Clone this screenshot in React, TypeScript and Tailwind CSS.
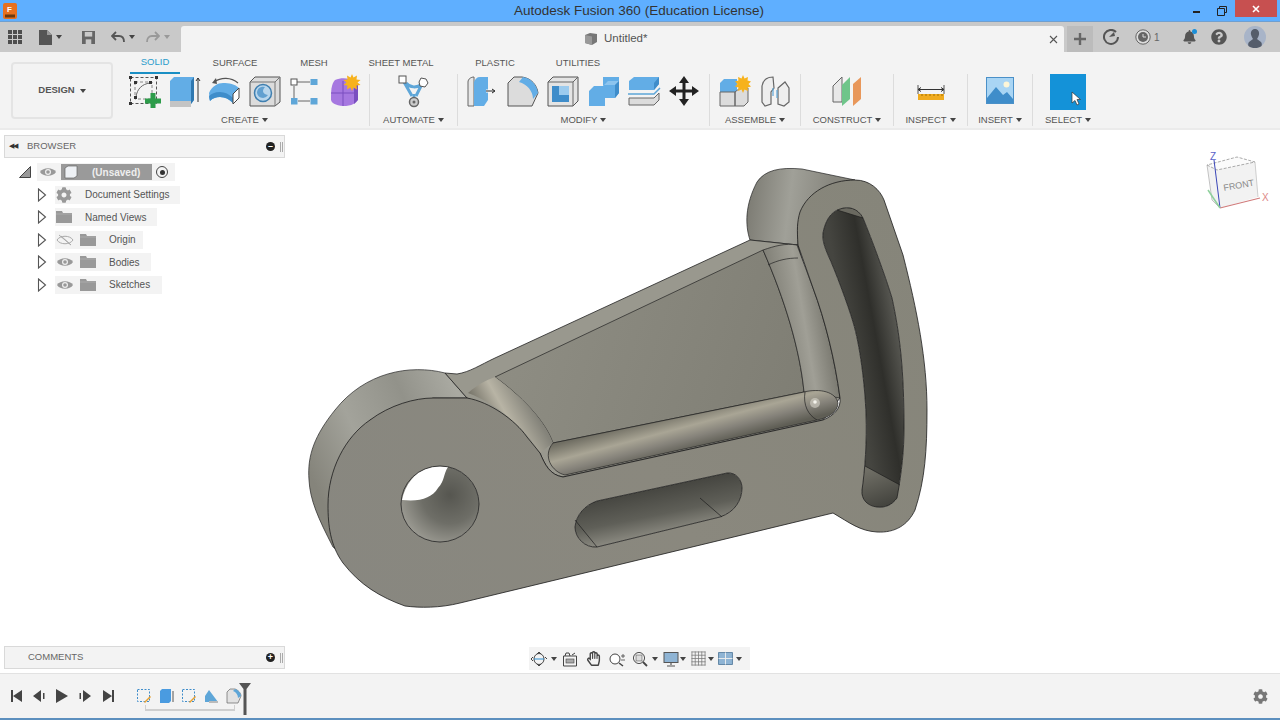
import React from 'react';
import { FaBell, FaCog, FaQuestionCircle, FaRegHandPaper } from 'react-icons/fa';

const font = { fontFamily: '"Liberation Sans", Arial, sans-serif' };

const Caret = ({ className = '' }: { className?: string }) => (
  <span className={`inline-block w-0 h-0 border-x-[3px] border-t-[4px] border-x-transparent border-t-[#444] ${className}`} />
);

// ribbon icons, all on a 34x34 box
const Ico = ({ children }: { children: React.ReactNode }) => (
  <svg viewBox="0 0 34 34" className="w-[34px] h-[34px] shrink-0">{children}</svg>
);

const SketchIcon = () => (
  <Ico>
    <rect x="3.5" y="3.5" width="26" height="26" fill="none" stroke="#555" strokeWidth="1" strokeDasharray="3 2" />
    <rect x="8" y="8" width="17" height="17" fill="none" stroke="#888" strokeWidth="1" strokeDasharray="3 2" />
    <path d="M9 23 C10 15 15 10 23 9" fill="none" stroke="#666" strokeWidth="1" />
    <path d="M2 2h3v3H2zM28 2h3v3h-3zM2 28h3v3H2zM7 7h3v3H7zM7 22h3v3H7zM22 7h3v3h-3z" fill="#333" />
    <path d="M23.500 19h5v5.500H34v5h-5.500V34h-5v-4.500H18v-5h5.500z" fill="#2d9c4a" />
  </Ico>
);
const ExtrudeIcon = () => (
  <Ico>
    <path d="M3 7l4-4h20v23l-3 4H3z" fill="#62ade6" />
    <path d="M24 7l3-4v23l-3 4z" fill="#2f78b0" />
    <path d="M3 27h21v6H3z" fill="#c4c4c4" />
    <path d="M31 28V4m-2 3l2-3 2 3" stroke="#333" fill="none" strokeWidth="1" />
  </Ico>
);
const RevolveIcon = () => (
  <Ico>
    <path d="M2 19 C5 12 11 9 16 9 C22 9 28 10 32 14 L26 20 V29 C22 25 18 23 13 23 C9 23 6 24 3 27z" fill="#62ade6" />
    <path d="M2 19 C2 22 2 25 3 27 C6 24 9 23 13 23 C18 23 22 25 26 29 V24 C22 20 18 18 13 18 C8 18 4 20 2 22z" fill="#3f8dca" />
    <path d="M26 20 L32 14 V24 L26 30z" fill="#fff" stroke="#444" strokeWidth="1" />
    <path d="M7 8 C14 3 24 3 31 9" fill="none" stroke="#555" strokeWidth="1.200" />
    <path d="M9 4 L5 9 L10 10z" fill="#555" />
  </Ico>
);
const HoleIcon = () => (
  <Ico>
    <path d="M2 8l5-5h25v25l-5 4H2z" fill="#dcdcdc" stroke="#555" strokeWidth="1" />
    <path d="M27 8l5-5M27 8H2M27 8v24" fill="none" stroke="#777" strokeWidth="1" />
    <circle cx="15" cy="19" r="8.5" fill="#b9d6ec" stroke="#3f7fb0" strokeWidth="1.5" />
    <path d="M9 19 a6 6 0 0 1 8-6 c-3 3-3 7 3 8 a6 6 0 0 1-11-2z" fill="#62a0d0" />
  </Ico>
);
const PatternIcon = () => (
  <Ico>
    <path d="M9 8h13M6 12v12M10 27h12" stroke="#666" strokeWidth="1" />
    <rect x="3" y="5" width="6" height="6" fill="#fff" stroke="#555" strokeWidth="1" />
    <rect x="22.5" y="5" width="7" height="6" fill="#5ea6d8" />
    <rect x="3" y="24" width="6.5" height="6.5" fill="#5ea6d8" />
    <rect x="22.5" y="24" width="7" height="6.5" fill="#5ea6d8" />
  </Ico>
);
const FormIcon = () => (
  <Ico>
    <path d="M7 6 C14 3 22 4 27 8 L30 24 C30 28 26 31 18 32 C10 32 4 30 3 26 C3 18 3 10 7 6z" fill="#a678e0" />
    <path d="M26 12l4-3v17l-4 4z" fill="#7a4fc0" />
    <path d="M3 19h24M15 7v25" stroke="#7a4fc0" strokeWidth="1" />
    <path d="M24 0l1.5 3.5L29 1.5l-.5 4L32.5 6l-3 2.5 3 2.5-4 .5.5 4-3.500-2-1.500 3.500-1.500-3.500-3.500 2 .5-4-4-.5 3-2.500-3-2.500 4-.5-.5-4 3.500 2z" fill="#f7b21c" />
  </Ico>
);
const AutomateIcon = () => (
  <Ico>
    <path d="M7 8 L15 22 M25 10 L19 22 M9 9 C13 14 20 14 25 10" fill="none" stroke="#5ea6d8" strokeWidth="3" />
    <path d="M17 20v8" stroke="#5ea6d8" strokeWidth="3" />
    <rect x="2" y="2" width="7" height="7" fill="#fff" stroke="#555" strokeWidth="1" />
    <path d="M24 4l5 1 2 4-3 4-5-1-1-4z" fill="#fff" stroke="#555" strokeWidth="1" />
    <circle cx="17" cy="28" r="4.500" fill="#ccc" stroke="#666" strokeWidth="1.500" />
    <circle cx="17" cy="28" r="1.500" fill="#666" />
  </Ico>
);
const PressPullIcon = () => (
  <Ico>
    <path d="M2 8 C2 5 5 3 8 3 V32 H2z" fill="#e6e6e6" stroke="#666" strokeWidth="1" />
    <path d="M8 8 C9 5 11 3 14 3 H22 V26 L18 32 H8z" fill="#62ade6" />
    <path d="M20 17h8" stroke="#fff" strokeWidth="3" />
    <path d="M20 17h8m-2-2l3 2-3 2" stroke="#222" fill="none" strokeWidth="1" />
  </Ico>
);
const FilletIcon = () => (
  <Ico>
    <path d="M2 9 L8 3 H16 C25 4 31 11 32 19 L26 32 H2z" fill="#dcdcdc" stroke="#555" strokeWidth="1" />
    <path d="M17 3 C25 4 31 11 32 19 L27 25 C27 17 21 10 13 8z" fill="#62ade6" />
  </Ico>
);
const ShellIcon = () => (
  <Ico>
    <path d="M2 8l5-5h25v24l-5 5H2z" fill="#e4e4e4" stroke="#555" strokeWidth="1" />
    <path d="M2 8h25v24M27 8l5-5" fill="none" stroke="#666" strokeWidth="1" />
    <rect x="6" y="12" width="17" height="16" fill="#9ccbee" />
    <path d="M6 12h7v9h10v7H6z" fill="#3f8dca" />
  </Ico>
);
const CombineIcon = () => (
  <Ico>
    <path d="M2 17l5-5h9V3l5 0h11v16l-4 5h-10v8H2z" fill="#62ade6" />
    <path d="M16 12l5-5h11l-4 4H16z" fill="#8cc4ee" />
    <path d="M28 11l4-4v12l-4 5z" fill="#3f8dca" />
  </Ico>
);
const SplitIcon = () => (
  <Ico>
    <path d="M2 7l5-4h25v7l-5 6H2z" fill="#62ade6" />
    <path d="M27 9l5-6v7l-5 6z" fill="#3f8dca" />
    <path d="M1 20h26l6-6" fill="none" stroke="#5ea6d8" strokeWidth="1.500" />
    <path d="M2 24h25l5-5v7l-5 5H2z" fill="#dcdcdc" stroke="#666" strokeWidth="1" />
  </Ico>
);
const MoveIcon = () => (
  <Ico>
    <path d="M17 2l5 7h-3.500v6.500H25V12l7 5-7 5v-3.500h-6.500V25H22l-5 7-5-7h3.500v-6.500H9V22l-7-5 7-5v3.500h6.500V9H12z" fill="#222" />
  </Ico>
);
const NewComponentIcon = () => (
  <Ico>
    <path d="M2 9l4-4h13v13H2z" fill="#62ade6" />
    <path d="M2 18h15v14H2zM17 18l5-4h8v14l-4 4h-9z" fill="#dcdcdc" stroke="#666" strokeWidth="1" />
    <path d="M25 1l1.500 3.500L30 3l-.5 3.500 3.500 1-2.500 2.500 2.500 2.500-3.500 1 .5 3.500-3.500-1.500L25 19l-1.500-3.500-3.500 1.500.5-3.500-3.500-1 2.500-2.500L17 7.500l3.500-1L20 3l3.500 1.500z" fill="#f7b21c" />
  </Ico>
);
const JointIcon = () => (
  <Ico>
    <path d="M4 12 C5 6 9 3 15 3 L16 14 L13 18 L13 30 L7 32 L4 28z" fill="#eee" stroke="#666" strokeWidth="1.200" />
    <path d="M20 14 L27 8 L31 14 V28 L26 32 L20 30z" fill="#eee" stroke="#666" strokeWidth="1.200" />
    <path d="M15 14v8M19 16v8" stroke="#5ea6d8" strokeWidth="1.200" />
  </Ico>
);
const ConstructIcon = () => (
  <Ico>
    <path d="M3 12 L12 3 V28 H3z" fill="#e8e8e8" stroke="#666" strokeWidth="1" />
    <path d="M12 11 L20 3 V25 L12 32z" fill="#6fc58a" />
    <path d="M23 10 L31 3 V25 L23 32z" fill="#e8975a" />
  </Ico>
);
const InspectIcon = () => (
  <Ico>
    <path d="M4 11v9M30 11v9" stroke="#555" strokeWidth="1" />
    <path d="M4 15.500h26m-23-2l-3 2 3 2m20-4l3 2-3 2" stroke="#333" fill="none" strokeWidth="1" />
    <rect x="4" y="20" width="26" height="6" fill="#f0ab1e" />
    <path d="M8 20v2M12 20v2M16 20v2M20 20v2M24 20v2M28 20v2" stroke="#a06f00" strokeWidth="1" />
  </Ico>
);
const InsertIcon = () => (
  <Ico>
    <rect x="3.500" y="3.500" width="27" height="26" fill="#a9d5f4" stroke="#4a90c8" />
    <circle cx="23.500" cy="10.500" r="3" fill="#fdf6d8" />
    <path d="M4 24 L13 13 L20 21 L24 18 L30 25 V29 H4z" fill="#3f8dca" />
  </Ico>
);

const Group = ({ w, label, last, children }: { w: string; label: string; last?: boolean; children: React.ReactNode }) => (
  <div className={`${w} h-[52px] flex flex-col items-center ${last ? '' : 'border-r border-[#dcdcdc]'}`}>
    <div className="h-[36px] flex items-start justify-center gap-[6.400px]">{children}</div>
    <div className="mt-[3px] pt-[1px] flex items-center gap-[3px] text-[9.500px] leading-[12px] text-[#555]">
      {label}
      <Caret />
    </div>
  </div>
);

const Eye = ({ off }: { off?: boolean }) => (
  <svg viewBox="0 0 18 12" className="w-[18px] h-[12px] shrink-0">
    <path d="M1 6 C4 1 14 1 17 6 C14 11 4 11 1 6z" fill={off ? 'none' : '#999'} stroke={off ? '#aaa' : 'none'} />
    {off ? <path d="M3 1l12 10M5 2l10 9" stroke="#aaa" /> : <circle cx="9" cy="6" r="3" fill="#eee" />}
    {!off && <circle cx="9" cy="6" r="1.800" fill="#999" />}
  </svg>
);
const Folder = () => (
  <svg viewBox="0 0 16 12" className="w-[16px] h-[12px] shrink-0">
    <path d="M0 0h6l1 2h9v10H0z" fill="#999" />
    <path d="M0 3h16" stroke="#bbb" strokeWidth=".6" />
  </svg>
);
const Chevron = () => (
  <svg viewBox="0 0 10 14" className="w-[10px] h-[14px] shrink-0">
    <path d="M1.500 1 L8.500 7 L1.500 13z" fill="#fff" stroke="#555" strokeWidth="1.100" />
  </svg>
);

const TreeRow = ({ w, label, eye, off, gear }: { w: string; label: string; eye?: boolean; off?: boolean; gear?: boolean }) => (
  <div className="h-[22.500px] flex items-center pl-[37px]">
    <Chevron />
    <div className={`ml-[8px] ${w} h-[18px] bg-[#f3f3f3] flex items-center pl-[1px] text-[10px] text-[#555]`}>
      {eye && <span className="mr-[6px] flex"><Eye off={off} /></span>}
      {gear ? <FaCog className="w-[16px] h-[16px] text-[#999] shrink-0" /> : <Folder />}
      <span className={`${eye ? 'ml-[13px]' : 'ml-[13px]'}`}>{label}</span>
    </div>
  </div>
);

const Panel = ({ children, sign }: { children: React.ReactNode; sign: string }) => (
  <div className="ml-[4px] w-[281px] h-[23px] bg-[#f3f3f3] border border-[#d9d9d9] flex items-center text-[9.500px] text-[#666]">
    {children}
    <span className="ml-auto w-[9px] h-[9px] rounded-full bg-[#222] text-white flex items-center justify-center text-[9px] leading-none font-bold">{sign}</span>
    <span className="ml-[5px] mr-[1px] w-[3px] h-[10px] border-x border-[#aaa]" />
  </div>
);

const bigSlot = 'M823 233 C825 222 830 212 840 209 C848 206 858 208 863 218 C872 240 885 275 892 298 C900 335 904 370 904 428 C904 450 902 470 897 498 C892 505 885 508 877 507 C868 506 861 500 862 490 C865 470 867 440 866 415 C865 385 860 345 853 322 C848 305 835 270 828 255 C825 248 822 240 823 233z';
const smallSlot = 'M575 527 C576 515 585 505 597 501 L727 473 C736 472 742 480 742 488 C742 500 735 512 720 517 L597 547 C585 548 575 538 575 527z';
const plate = 'M855 180 C870 180 880 190 884 200 L903 255 C917 310 927 360 927 410 C927 450 925 480 915 510 C908 525 895 533 877 532 C860 531 850 523 833 513 L460 603 C440 608 420 608 405 606 C380 597 360 585 343 563 C330 545 328 525 328 505 C328 470 345 437 370 420 C390 405 415 398 433 398 L467 398 C490 402 515 420 527 437 L540 453 C545 465 550 475 563 477 L823 420 C835 415 841 408 840 398 C835 360 825 320 813 288 L798 245 C797 230 797 222 800 212 C808 192 830 180 855 180z';

const Model = () => (
  <svg viewBox="0 130 1280 543" className="absolute left-0 top-0 w-[1280px] h-[543px]">
    <defs>
      <linearGradient id="boss" x1="308" y1="470" x2="460" y2="400" gradientUnits="userSpaceOnUse">
        <stop offset="0" stopColor="#85847b" />
        <stop offset=".35" stopColor="#a3a39b" />
        <stop offset=".7" stopColor="#92928a" />
        <stop offset="1" stopColor="#a9a9a1" />
      </linearGradient>
      <linearGradient id="floor" x1="500" y1="300" x2="800" y2="400" gradientUnits="userSpaceOnUse">
        <stop offset="0" stopColor="#8f8e84" />
        <stop offset="1" stopColor="#7f7e74" />
      </linearGradient>
      <linearGradient id="tube" x1="680" y1="412" x2="690" y2="450" gradientUnits="userSpaceOnUse">
        <stop offset="0" stopColor="#716f64" />
        <stop offset=".4" stopColor="#a9a595" />
        <stop offset=".7" stopColor="#85827a" />
        <stop offset="1" stopColor="#5f5e55" />
      </linearGradient>
      <linearGradient id="lfillet" x1="480" y1="420" x2="525" y2="395" gradientUnits="userSpaceOnUse">
        <stop offset="0" stopColor="#6e6c62" />
        <stop offset=".5" stopColor="#b8b4a5" />
        <stop offset="1" stopColor="#84837a" />
      </linearGradient>
      <linearGradient id="rfillet" x1="775" y1="330" x2="835" y2="320" gradientUnits="userSpaceOnUse">
        <stop offset="0" stopColor="#7f7e75" />
        <stop offset=".5" stopColor="#a09f96" />
        <stop offset="1" stopColor="#6f6e65" />
      </linearGradient>
      <linearGradient id="topboss" x1="748" y1="200" x2="830" y2="210" gradientUnits="userSpaceOnUse">
        <stop offset="0" stopColor="#7d7c74" />
        <stop offset=".5" stopColor="#a0a098" />
        <stop offset="1" stopColor="#87867e" />
      </linearGradient>
      <linearGradient id="bigslot" x1="850" y1="350" x2="905" y2="340" gradientUnits="userSpaceOnUse">
        <stop offset="0" stopColor="#454540" />
        <stop offset=".5" stopColor="#2f2f2b" />
        <stop offset="1" stopColor="#60605a" />
      </linearGradient>
      <linearGradient id="slotcap" x1="870" y1="470" x2="885" y2="510" gradientUnits="userSpaceOnUse">
        <stop offset="0" stopColor="#6f6e65" />
        <stop offset="1" stopColor="#3f3f3a" />
      </linearGradient>
      <linearGradient id="smallslot" x1="650" y1="485" x2="660" y2="535" gradientUnits="userSpaceOnUse">
        <stop offset="0" stopColor="#42423d" />
        <stop offset=".6" stopColor="#5f5f58" />
        <stop offset="1" stopColor="#8c8b82" />
      </linearGradient>
      <radialGradient id="hole" cx="450" cy="495" r="52" gradientUnits="userSpaceOnUse">
        <stop offset="0" stopColor="#565650" />
        <stop offset=".55" stopColor="#6e6e67" />
        <stop offset="1" stopColor="#9b9a92" />
      </radialGradient>
      <linearGradient id="face" x1="330" y1="600" x2="920" y2="250" gradientUnits="userSpaceOnUse">
        <stop offset="0" stopColor="#888780" />
        <stop offset=".5" stopColor="#8a887e" />
        <stop offset="1" stopColor="#86857a" />
      </linearGradient>
    </defs>

    {/* back of the two bosses */}
    <path d="M445 373 C410 364 365 372 335 410 C315 435 307 455 309 480 C310 500 318 518 333 547 L350 560 L370 420 L433 398 L467 398z" fill="url(#boss)" stroke="#222" strokeWidth=".7" />
    <path d="M750 240 C745 225 745 205 757 182 C765 170 780 167 802 169 L855 180 C830 182 807 197 798 225 L798 245z" fill="url(#topboss)" stroke="#222" strokeWidth=".7" />

    {/* web and pocket */}
    <path d="M457 374 C470 372 480 365 495 358 L750 240 L798 245 L840 398 L823 420 L563 477 C550 475 545 465 540 453 L500 413 L467 398 L445 373z" fill="#99988e" stroke="#222" strokeWidth=".8" />
    <path d="M495 377 L763 250 C785 300 800 350 804 392 L553 443 C545 420 520 395 495 377z" fill="url(#floor)" stroke="#222" strokeWidth=".7" />
    <path d="M763 250 C775 246 785 243 797 245 L813 288 C825 320 835 360 840 398 L804 392 C800 350 785 300 763 250z" fill="url(#rfillet)" stroke="#222" strokeWidth=".7" />
    <path d="M468 393 C478 384 487 380 495 377 C520 395 545 420 553 443 L540 453 C528 432 500 405 468 393z" fill="url(#lfillet)" />
    <path d="M553 443 L804 392 C820 388 836 392 838 403 C838 412 828 418 817 420 L565 475 C552 472 542 456 553 443z" fill="url(#tube)" stroke="#222" strokeWidth=".7" />
    <circle cx="815" cy="403" r="5" fill="#d8d6cc" opacity=".6" />
    <circle cx="815" cy="402" r="1.800" fill="#f4f3ec" />
    <path d="M768 265 C778 260 788 258 798 258" fill="none" stroke="#222" strokeWidth=".7" />
    <path d="M805 392 C803 405 808 415 817 420" fill="none" stroke="#222" strokeWidth=".7" />

    {/* what shows through the cut-outs */}
    <path d={bigSlot} fill="url(#bigslot)" />
    <path d="M865 466 L900 485 L897 498 C892 505 885 508 877 507 C868 506 861 500 862 490z" fill="url(#slotcap)" />
    <path d="M837 210 C848 206 858 208 863 218z" fill="#6a6960" />
    <path d={smallSlot} fill="url(#smallslot)" />
    <ellipse cx="440" cy="504" rx="39" ry="38" fill="url(#hole)" />
    <path d="M402 500 C405 485 415 472 427 468 C433 466 442 466 448 467 C443 475 445 480 438 488 C432 498 420 502 402 500z" fill="#fff" />

    {/* front plate */}
    <path
      fillRule="evenodd"
      d={`${plate} ${bigSlot} ${smallSlot} M479 504 A39 38 0 1 0 401 504 A39 38 0 1 0 479 504z`}
      fill="url(#face)"
      stroke="#1c1c1c"
      strokeWidth=".8"
    />
    <path d="M865 466 L900 485M575 520 L597 547M700 498 L722 517M837 210 L863 218" fill="none" stroke="#1c1c1c" strokeWidth=".7" />
  </svg>
);

const NavCube = () => (
  <svg viewBox="1190 145 90 75" className="absolute right-0 top-[15px] w-[90px] h-[75px]">
    <path d="M1207 165 L1237 157 L1255 162 L1258 197 L1220 208 L1212 200z" fill="#f2f2f2" />
    <path d="M1207 165 L1217 170 L1255 162 L1237 157z" fill="#fbfbfb" stroke="#888" strokeWidth=".7" strokeDasharray="3 1.500" />
    <path d="M1207 165 L1212 200 L1220 208" fill="none" stroke="#aaa" strokeWidth=".7" />
    <path d="M1255 162 L1258 197" fill="none" stroke="#bbb" strokeWidth=".7" />
    <text x="1224" y="191" fontSize="9" fill="#888" transform="rotate(-10 1224 191)" style={font}>FRONT</text>
    <path d="M1220 208 L1214 160" stroke="#3a46b8" strokeWidth="1" />
    <path d="M1220 208 L1260 198" stroke="#d07a7a" strokeWidth="1.200" />
    <path d="M1220 208 L1208 190" stroke="#8fd09c" strokeWidth="1.500" />
    <text x="1210" y="160" fontSize="10" fill="#5a62c8" style={font}>Z</text>
    <text x="1262" y="201" fontSize="10" fill="#d88" style={font}>X</text>
  </svg>
);

const NavBar = () => (
  <div className="absolute left-[529px] top-[517px] w-[221px] h-[23px] bg-[#f3f3f3] flex items-center pl-[1px]">
    <svg viewBox="0 0 18 16" className="w-[18px] h-[16px]">
      <path d="M9 1l2 2M9 1L7 3M1 8l2-2M1 8l2 2M9 15l2-2M9 15l-2-2M17 8l-2-2" stroke="#444" fill="none" />
      <ellipse cx="9" cy="8" rx="5" ry="5.500" fill="none" stroke="#444" />
      <path d="M4 8h10" stroke="#2f8fd0" />
    </svg>
    <Caret className="ml-[3px]" />
    <svg viewBox="0 0 16 16" className="w-[16px] h-[16px] ml-[5px]">
      <path d="M1.500 5h13v10h-13zM3 5l1-3h3l1 3M10 4l3-2" fill="none" stroke="#444" />
      <rect x="4" y="8" width="8" height="4" fill="#aaa" stroke="#444" strokeWidth=".6" />
    </svg>
    <FaRegHandPaper className="w-[15px] h-[15px] ml-[8px] text-[#444]" />
    <svg viewBox="0 0 18 16" className="w-[18px] h-[16px] ml-[7px]">
      <circle cx="7" cy="8" r="5" fill="#fff" stroke="#444" />
      <path d="M11 12l4 3" stroke="#444" strokeWidth="1.500" />
      <path d="M13 5h4M15 3v4M13 9h4" stroke="#444" strokeWidth=".8" />
    </svg>
    <svg viewBox="0 0 18 16" className="w-[18px] h-[16px] ml-[5px]">
      <circle cx="8" cy="7" r="5.500" fill="#fff" stroke="#444" />
      <rect x="5" y="4" width="6" height="6" fill="#ddd" stroke="#666" strokeWidth=".7" />
      <path d="M12 11l4 4" stroke="#444" strokeWidth="1.800" />
    </svg>
    <Caret className="ml-[3px]" />
    <svg viewBox="0 0 16 16" className="w-[16px] h-[16px] ml-[5px]">
      <rect x="1" y="1.500" width="14" height="10" fill="#8fb4d4" stroke="#555" />
      <path d="M8 12v2M4 15h8" stroke="#555" strokeWidth="1.200" />
    </svg>
    <Caret className="ml-[1px]" />
    <svg viewBox="0 0 16 16" className="w-[15px] h-[15px] ml-[5px]">
      <path d="M.5 1h15M.5 4.500h15M.5 8h15M.5 11.500h15M.5 15h15M1 .5v15M4.500 .5v15M8 .5v15M11.500 .5v15M15 .5v15" stroke="#777" strokeWidth=".8" />
    </svg>
    <Caret className="ml-[2px]" />
    <svg viewBox="0 0 16 14" className="w-[15px] h-[13px] ml-[4px]">
      <path d="M.5 .5h15v13H.5z" fill="#8fb4d4" stroke="#5a7fa0" />
      <path d="M8 .5v13M.5 7h15" stroke="#eee" />
    </svg>
    <Caret className="ml-[3px]" />
  </div>
);

const MiniSketch = () => (
  <svg viewBox="0 0 16 16" className="w-[16px] h-[16px]">
    <rect x="1.500" y="1.500" width="12" height="12" fill="none" stroke="#3f8dca" strokeDasharray="2 1.500" />
    <path d="M8 14l6-6 1 1-6 6z" fill="#e8a030" />
  </svg>
);

export default function App() {
  return (
    <div className="w-[1280px] h-[720px] overflow-hidden bg-white flex flex-col" style={font}>
      {/* title bar */}
      <div className="h-[22px] bg-[#5fafff] border-b border-[#6f9fd0] flex items-center relative shrink-0">
        <svg viewBox="0 0 14 16" className="w-[14px] h-[16px] ml-[3px]">
          <rect width="14" height="16" rx="2" fill="#e8701e" />
          <text x="4" y="9" fontSize="8" fontWeight="700" fill="#fff" style={font}>F</text>
          <rect x="2" y="11.500" width="10" height="3" fill="#6b3a10" />
        </svg>
        <div className="flex-1 text-center text-[13.500px] leading-[20px] text-[#333] pl-[68px]">Autodesk Fusion 360 (Education License)</div>
        <span className="w-[7px] h-[2px] bg-[#222] mr-[17px] mt-[3px]" />
        <svg viewBox="0 0 10 10" className="w-[10px] h-[10px] mr-[8px]">
          <path d="M2.500 2.500V.5h7v6h-2M.5 2.500h7v7h-7z" fill="none" stroke="#222" />
        </svg>
        <div className="w-[42px] h-[17px] self-start bg-[#c75050] flex items-center justify-center mr-[3px]">
          <svg viewBox="0 0 8 8" className="w-[8px] h-[8px]"><path d="M1 1l6 6M7 1L1 7" stroke="#fff" strokeWidth="1.600" /></svg>
        </div>
      </div>

      {/* quick access row and document tab */}
      <div className="h-[30px] bg-[#c9c9c9] flex items-center shrink-0">
        <div className="w-[181px] shrink-0 flex items-center pl-[8px]">
          <svg viewBox="0 0 14 14" className="w-[14px] h-[14px]">
            <path d="M0 0h4v4H0zM5 0h4v4H5zM10 0h4v4h-4zM0 5h4v4H0zM5 5h4v4H5zM10 5h4v4h-4zM0 10h4v4H0zM5 10h4v4H5zM10 10h4v4h-4z" fill="#4d4d4d" />
          </svg>
          <svg viewBox="0 0 13 15" className="w-[13px] h-[15px] ml-[17px]"><path d="M0 0h8l5 5v10H0z" fill="#555" /><path d="M8 0v5h5" fill="#999" /></svg>
          <Caret className="ml-[4px]" />
          <svg viewBox="0 0 14 14" className="w-[13px] h-[13px] ml-[20px]">
            <path d="M0 0h14v14H0z" fill="#666" /><rect x="3" y="1" width="8" height="5" fill="#c9c9c9" /><rect x="4" y="9" width="6" height="5" fill="#c9c9c9" />
          </svg>
          <svg viewBox="0 0 14 12" className="w-[14px] h-[12px] ml-[16px]"><path d="M5 1L1 5l4 4M1 5h7c3 0 5 2 5 6" fill="none" stroke="#555" strokeWidth="1.800" /></svg>
          <Caret className="ml-[4px]" />
          <svg viewBox="0 0 14 12" className="w-[14px] h-[12px] ml-[11px]"><path d="M9 1l4 4-4 4M13 5H6C3 5 1 7 1 11" fill="none" stroke="#999" strokeWidth="1.800" /></svg>
          <span className="ml-[4px] w-0 h-0 border-x-[3px] border-t-[4px] border-x-transparent border-t-[#999]" />
        </div>
        <div className="w-[883px] h-[26px] mt-[4px] self-start bg-[#f3f3f3] rounded-t-[3px] flex items-center shrink-0 relative">
          <svg viewBox="0 0 14 14" className="w-[14px] h-[14px] ml-[403px]">
            <path d="M1 3l5-2 7 1v8l-5 3-7-2z" fill="#777" /><path d="M1 3l7 1.500V13l-7-2z" fill="#999" />
          </svg>
          <span className="ml-[6px] text-[11.500px] text-[#555]">Untitled*</span>
          <svg viewBox="0 0 9 9" className="w-[9px] h-[9px] ml-auto mr-[6px]"><path d="M1 1l7 7M8 1L1 8" stroke="#555" strokeWidth="1.100" /></svg>
        </div>
        <div className="w-[26px] h-[26px] mt-[4px] self-start ml-[3px] bg-[#bcbcbc] flex items-center justify-center shrink-0">
          <svg viewBox="0 0 12 12" className="w-[12px] h-[12px]"><path d="M6 0v12M0 6h12" stroke="#666" strokeWidth="2.400" /></svg>
        </div>
        <svg viewBox="0 0 16 16" className="w-[16px] h-[16px] ml-[10px] shrink-0">
          <path d="M13 3 A7 7 0 1 0 15 8" fill="none" stroke="#555" strokeWidth="2" /><path d="M6 8l5-5 1 4z" fill="#555" />
        </svg>
        <svg viewBox="0 0 16 16" className="w-[16px] h-[16px] ml-[16px] shrink-0">
          <circle cx="8" cy="8" r="7.200" fill="#ddd" stroke="#666" /><circle cx="8" cy="8" r="5" fill="#666" /><path d="M8 5v3h3" stroke="#ddd" fill="none" />
        </svg>
        <span className="ml-[3px] text-[10px] text-[#666] shrink-0">1</span>
        <span className="ml-[23px] relative shrink-0 flex">
          <FaBell className="w-[13px] h-[14px] text-[#555]" />
          <span className="absolute -right-[1px] -top-[1px] w-[5px] h-[5px] rounded-full bg-[#1b8fd8]" />
        </span>
        <FaQuestionCircle className="w-[16px] h-[16px] ml-[15px] text-[#555] shrink-0" />
        <svg viewBox="0 0 22 22" className="w-[22px] h-[22px] ml-[17px] shrink-0">
          <circle cx="11" cy="11" r="11" fill="#a8b4c8" />
          <path d="M11 3c3 0 4.500 2.500 4 5.500-.5 2-1.500 3.500-2 4.500l4 3c1 1 1 3 .5 4-2 1.500-4 2-6.500 2s-4.500-.5-6.500-2c-.5-1-.5-3 .5-4l4-3c-.5-1-1.500-2.500-2-4.500C6.500 5.500 8 3 11 3z" fill="#555d6b" />
        </svg>
      </div>

      {/* ribbon */}
      <div className="h-[76px] bg-[#f3f3f3] flex shrink-0">
        <div className="ml-[11px] mt-[10px] w-[102px] h-[57px] border-2 border-[#e4e4e4] rounded-[4px] flex items-center justify-center gap-[5px] text-[9.500px] font-bold text-[#555] shrink-0">
          DESIGN <Caret />
        </div>
        <div className="ml-[7px] flex flex-col">
          <div className="h-[22px] flex text-[9.500px] text-[#555]">
            <div className="ml-[10px] w-[50px] h-[22px] border-b-2 border-[#1a8fc4] text-[#2a9ccb] flex items-center justify-center">SOLID</div>
            <div className="ml-[25px] w-[60px] flex items-center justify-center">SURFACE</div>
            <div className="ml-[25px] w-[48px] flex items-center justify-center">MESH</div>
            <div className="ml-[27px] w-[72px] flex items-center justify-center">SHEET METAL</div>
            <div className="ml-[33px] w-[50px] flex items-center justify-center">PLASTIC</div>
            <div className="ml-[33px] w-[50px] flex items-center justify-center">UTILITIES</div>
          </div>
          <div className="flex">
            <Group w="w-[250px]" label="CREATE">
              <SketchIcon /><ExtrudeIcon /><RevolveIcon /><HoleIcon /><PatternIcon /><FormIcon />
            </Group>
            <Group w="w-[88px]" label="AUTOMATE"><AutomateIcon /></Group>
            <Group w="w-[252px]" label="MODIFY">
              <PressPullIcon /><FilletIcon /><ShellIcon /><CombineIcon /><SplitIcon /><MoveIcon />
            </Group>
            <Group w="w-[91px]" label="ASSEMBLE"><NewComponentIcon /><JointIcon /></Group>
            <Group w="w-[93px]" label="CONSTRUCT"><ConstructIcon /></Group>
            <Group w="w-[74px]" label="INSPECT"><InspectIcon /></Group>
            <Group w="w-[65px]" label="INSERT"><InsertIcon /></Group>
            <Group w="w-[70px]" label="SELECT" last>
              <div className="w-[36px] h-[36px] bg-[#1492d8] flex items-end justify-end pr-[5px] pb-[4px]">
                <svg viewBox="0 0 10 15" className="w-[10px] h-[15px]"><path d="M1 1v11l3-2.500 2 4.500 2-1-2-4.500h3.500z" fill="#fff" stroke="#333" strokeWidth=".7" /></svg>
              </div>
            </Group>
          </div>
        </div>
      </div>
      <div className="h-[2px] bg-[#ebebeb] shrink-0" />

      {/* canvas */}
      <div className="relative flex-1 bg-white">
        <Model />
        <NavCube />
        <NavBar />
        <div className="relative h-full flex flex-col pt-[5px] pb-[4px]">
          <Panel sign="–">
            <span className="ml-[4px] text-[7px] tracking-[-1px] text-[#333]">◀◀</span>
            <span className="ml-[10px]">BROWSER</span>
          </Panel>
          <div className="mt-[3px] h-[22.500px] flex items-center pl-[19px]">
            <svg viewBox="0 0 12 12" className="w-[12px] h-[12px] shrink-0"><path d="M.5 11.500L11.500 .5v11z" fill="#999" stroke="#444" /></svg>
            <div className="ml-[6px] w-[138px] h-[18px] bg-[#f3f3f3] flex items-center pl-[2px] text-[10px]">
              <Eye />
              <div className="ml-[4px] w-[91px] h-[16px] bg-[#9a9a9a] flex items-center">
                <svg viewBox="0 0 14 14" className="w-[14px] h-[14px] ml-[3px]"><path d="M1 3l3-2h9v10l-3 2H1z" fill="#eef1f5" stroke="#666" strokeWidth=".7" /></svg>
                <span className="ml-[14px] font-bold text-[#eee]">(Unsaved)</span>
              </div>
              <span className="ml-[4px] w-[12px] h-[12px] rounded-full border border-[#444] flex items-center justify-center">
                <span className="w-[5px] h-[5px] rounded-full bg-[#333]" />
              </span>
            </div>
          </div>
          <TreeRow w="w-[125px]" label="Document Settings" gear />
          <TreeRow w="w-[102px]" label="Named Views" />
          <TreeRow w="w-[88px]" label="Origin" eye off />
          <TreeRow w="w-[96px]" label="Bodies" eye />
          <TreeRow w="w-[107px]" label="Sketches" eye />
          <div className="mt-auto">
            <Panel sign="+">
              <span className="ml-[23px]">COMMENTS</span>
            </Panel>
          </div>
        </div>
      </div>

      {/* timeline */}
      <div className="h-[45px] bg-[#f3f3f3] border-t border-[#e2e2e2] flex items-center shrink-0">
        <div className="flex items-center pl-[10px]">
          <svg viewBox="0 0 12 12" className="w-[12px] h-[12px]"><path d="M1 0h2v12H1zM12 0v12L3 6z" fill="#444" /></svg>
          <svg viewBox="0 0 12 12" className="w-[12px] h-[12px] ml-[11px]"><path d="M8 0v12L0 6zM10 3h1.500v6H10z" fill="#444" /></svg>
          <svg viewBox="0 0 12 14" className="w-[12px] h-[14px] ml-[11px]"><path d="M0 0l12 7-12 7z" fill="#444" /></svg>
          <svg viewBox="0 0 12 12" className="w-[12px] h-[12px] ml-[11px]"><path d="M4 0v12l8-6zM.5 3H2v6H.5z" fill="#444" /></svg>
          <svg viewBox="0 0 12 12" className="w-[12px] h-[12px] ml-[12px]"><path d="M0 0v12l9-6zM9 0h2v12H9z" fill="#444" /></svg>
        </div>
        <div className="ml-[21px] w-[120px] h-[42px] flex flex-col">
          <div className="relative h-[42px]">
            <div className="pt-[13px] flex gap-[6.500px]">
              <MiniSketch />
              <svg viewBox="0 0 16 16" className="w-[16px] h-[16px]"><path d="M1 3l2-2h9v12l-2 2H1z" fill="#4a9be0" /><path d="M14 3v11" stroke="#555" /></svg>
              <MiniSketch />
              <svg viewBox="0 0 16 16" className="w-[16px] h-[16px]"><path d="M1 14V8l4-6 9 12z" fill="#5ea6d8" /><path d="M5 14l9 0" stroke="#bbb" strokeWidth="2" /></svg>
              <svg viewBox="0 0 16 16" className="w-[16px] h-[16px]"><path d="M1 4l3-3h5c3 1 6 4 6 7l-3 7H1z" fill="#e2e2e2" stroke="#666" strokeWidth=".7" /><path d="M9 1c3 1 6 4 6 7l-3 2c0-3-2-6-5-7z" fill="#5ea6d8" /></svg>
            </div>
            <div className="absolute left-[9px] top-[30px] w-[90px] h-[6px] border-b-2 border-x border-[#cfcfcf]" />
            <svg viewBox="0 0 12 32" className="absolute left-[103px] top-[8px] w-[12px] h-[32px]">
              <path d="M0 0h12L7.500 6v26h-3V6z" fill="#555" />
            </svg>
          </div>
        </div>
        <FaCog className="ml-auto mr-[12px] w-[15px] h-[15px] text-[#777]" />
      </div>
      <div className="h-[2px] bg-[#5c8fbe] shrink-0" />
    </div>
  );
}
